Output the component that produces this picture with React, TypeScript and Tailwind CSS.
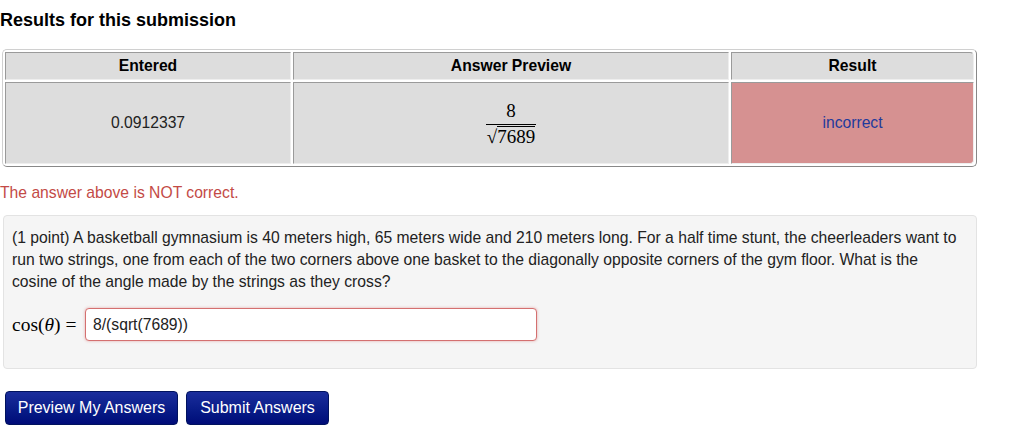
export default function App() {
  const sans = { fontFamily: '"Liberation Sans", Arial, Helvetica, sans-serif' };
  const serif = { fontFamily: '"Liberation Serif", "Times New Roman", serif' };

  const cell =
    'bg-[#dddddd] border border-t-[#9a9a9a] border-l-[#9a9a9a] border-r-[#eee] border-b-[#eee]';

  return (
    <div className="bg-white w-[1024px] h-[438px] overflow-hidden text-[#222]" style={sans}>
      <h2 className="pt-[10px] text-[18px] leading-[21px] font-bold text-black">
        Results for this submission
      </h2>

      {/* Results table */}
      <div className="mt-[18px] ml-[2px] w-[975px]">
        <table className="w-full border-separate border-spacing-[2px] border border-t-[#d0d0d0] border-l-[#d0d0d0] border-r-[#888] border-b-[#888] rounded-[5px] text-[15.7px]">
          <thead>
            <tr className="h-[28px]">
              <th className={`w-[286px] ${cell} font-bold text-black leading-[18px]`}>Entered</th>
              <th className={`w-[436px] ${cell} font-bold text-black leading-[18px]`}>Answer Preview</th>
              <th className={`${cell} rounded-tr-[4px] font-bold text-black leading-[18px]`}>Result</th>
            </tr>
          </thead>
          <tbody>
            <tr className="h-[82px]">
              <td className={`${cell} text-center text-[#222]`}>0.0912337</td>
              <td className={`${cell} text-center`}>
                <div className="inline-flex flex-col items-center text-[19px] text-black mt-[-4px]" style={serif}>
                  <span className="leading-[20px] pb-[3px]">8</span>
                  <span className="border-t border-black px-[1px] pt-[1px] flex items-start">
                    <span className="leading-[21px]">√</span>
                    <span className="border-t border-black leading-[19px]">7689</span>
                  </span>
                </div>
              </td>
              <td className="bg-[#d69191] border border-t-[#9a9a9a] border-l-[#9a9a9a] border-r-[#eee] border-b-[#eee] rounded-br-[4px] text-center text-[#1f3a9c]">
                incorrect
              </td>
            </tr>
          </tbody>
        </table>
      </div>

      <p className="mt-[16px] text-[15.7px] leading-[20px] text-[#c34a46]">
        The answer above is NOT correct.
      </p>

      {/* Problem */}
      <div className="mt-[12px] ml-[3px] w-[974px] h-[154px] bg-[#f5f5f5] border border-[#e3e3e3] rounded-[4px] pt-[11px] pl-[8px] pr-[14px]">
        <p className="text-[15.7px] leading-[22px] text-[#222]">
          (1 point) A basketball gymnasium is 40 meters high, 65 meters wide and 210 meters long. For a half time stunt, the cheerleaders want to
          run two strings, one from each of the two corners above one basket to the diagonally opposite corners of the gym floor. What is the
          cosine of the angle made by the strings as they cross?
        </p>
        <div className="mt-[15px] flex items-center">
          <span className="w-[73px] text-[19.5px] text-black whitespace-nowrap" style={serif}>
            cos(<i>θ</i>) =
          </span>
          <input
            readOnly
            value="8/(sqrt(7689))"
            className="w-[452px] h-[33px] bg-white border border-[#d47070] rounded-[4px] px-[7px] text-[15.7px] text-[#222] shadow-[0_0_3px_rgba(210,80,80,0.45)] outline-none"
            style={sans}
          />
        </div>
      </div>

      {/* Buttons */}
      <div className="mt-[22px] ml-[5px] flex gap-[8px]">
        <button className="w-[173px] h-[34px] rounded-[4px] border border-[#00125e] bg-gradient-to-b from-[#1a2d9c] to-[#000b78] text-white text-[16px] leading-[20px]">
          Preview My Answers
        </button>
        <button className="w-[143px] h-[34px] rounded-[4px] border border-[#00125e] bg-gradient-to-b from-[#1a2d9c] to-[#000b78] text-white text-[16px] leading-[20px]">
          Submit Answers
        </button>
      </div>
    </div>
  );
}
